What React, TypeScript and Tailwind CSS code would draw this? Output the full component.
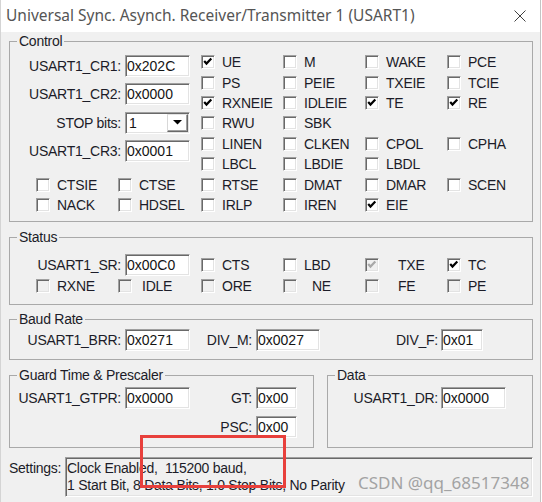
import React from "react";

const SUNK =
  "border border-t-[#a0a0a0] border-l-[#a0a0a0] border-b-white border-r-white shadow-[inset_1px_1px_0_#696969,inset_-1px_-1px_0_#e3e3e3]";
const TXT = "text-[14px] tracking-[-0.25px] text-[#1c1c28] whitespace-nowrap";

function Check({ checked = false, disabled = false }: { checked?: boolean; disabled?: boolean }) {
  return (
    <span className={`relative block w-[14px] h-[14px] shrink-0 ${SUNK} ${disabled ? "bg-[#f0f0f0]" : "bg-white"}`}>
      {checked && (
        <svg className="absolute left-0 top-0" width="12" height="12" viewBox="0 0 12 12">
          <path
            d="M2.2 5 L4.5 7.6 L9.3 2.6"
            fill="none"
            stroke={disabled ? "#a8a8a8" : "#000"}
            strokeWidth="2.2"
          />
        </svg>
      )}
    </span>
  );
}

function CB({
  label,
  checked = false,
  disabled = false,
  gap = "ml-[7px]",
}: {
  label?: string;
  checked?: boolean;
  disabled?: boolean;
  gap?: string;
}) {
  if (!label) return <div className="h-[20.4px]" />;
  return (
    <div className="flex items-center h-[20.4px]">
      <Check checked={checked} disabled={disabled} />
      <span className={`${gap} ${TXT} leading-[16px]`}>{label}</span>
    </div>
  );
}

function Field({ value, w }: { value: string; w: string }) {
  return (
    <div
      className={`${w} h-[22px] shrink-0 bg-white ${SUNK} pl-[1px] text-[14px] leading-[20px] text-[#141414] whitespace-nowrap overflow-hidden`}
    >
      {value}
    </div>
  );
}

function LabeledField({
  label,
  value,
  boxW,
  outer,
  gap = "gap-[4px]",
}: {
  label: string;
  value: string;
  boxW: string;
  outer: string;
  gap?: string;
}) {
  return (
    <div className={`${outer} flex justify-end items-center ${gap} shrink-0`}>
      <span className={`${TXT} leading-[16px]`}>{label}</span>
      <Field value={value} w={boxW} />
    </div>
  );
}

function Group({
  title,
  className = "",
  children,
}: {
  title: string;
  className?: string;
  children: React.ReactNode;
}) {
  return (
    <fieldset className={`border border-[#a9a9a9] min-w-0 ${className}`}>
      <legend className={`ml-[7px] px-[2px] leading-[15px] ${TXT}`}>{title}</legend>
      {children}
    </fieldset>
  );
}

export default function App() {
  return (
    <div className="relative w-[542px] h-[502px] bg-white overflow-hidden font-['Liberation_Sans',Arial,sans-serif]">
      <div className="w-[541px] h-[502px] bg-[#f0f0f0] border-l border-r border-l-[#d4d4d4] border-r-[#c4c4c4] flex flex-col">
        {/* title bar */}
        <div className="h-[32px] shrink-0 bg-white flex items-center justify-between pl-[5px] pr-[14px]">
          <span className="font-['Noto_Sans',sans-serif] text-[15.5px] text-[#555555] whitespace-nowrap">
            Universal Sync. Asynch. Receiver/Transmitter 1 (USART1)
          </span>
          <svg width="12" height="12" viewBox="0 0 12 12">
            <path d="M0.5 0.5 L11.5 11.5 M11.5 0.5 L0.5 11.5" stroke="#404040" strokeWidth="1" />
          </svg>
        </div>

        <div className="pl-[8px] pr-[7px] flex flex-col">
          {/* Control */}
          <Group title="Control" className="mt-[2px]">
            <div className="flex">
              <div className="w-[191px] pr-[11px] pt-[6px] flex flex-col items-end gap-[6.4px] shrink-0">
                <LabeledField label="USART1_CR1:" value="0x202C" boxW="w-[65px]" outer="" />
                <LabeledField label="USART1_CR2:" value="0x0000" boxW="w-[65px]" outer="" />
                <div className="flex items-center gap-[4px]">
                  <span className={`${TXT} leading-[16px]`}>STOP bits:</span>
                  <div className={`w-[65px] h-[22px] bg-white ${SUNK} flex items-center`}>
                    <span className="pl-[3px] flex-1 text-[14px] leading-[20px] text-[#141414]">1</span>
                    <div className="w-[21px] h-[18px] mr-[1px] bg-white border border-t-[#e3e3e3] border-l-[#d8d8d8] border-b-[#696969] border-r-[#696969] shadow-[inset_-1px_-1px_0_#a0a0a0] flex items-center justify-center">
                      <svg width="9" height="5" viewBox="0 0 9 5">
                        <path d="M0 0 H9 L4.5 4.5 Z" fill="#000" />
                      </svg>
                    </div>
                  </div>
                </div>
                <LabeledField label="USART1_CR3:" value="0x0001" boxW="w-[65px]" outer="" />
              </div>
              <div className="mt-[3px] grid grid-cols-[82px_82px_82px_82px]">
                <CB label="UE" checked />
                <CB label="M" />
                <CB label="WAKE" />
                <CB label="PCE" />
                <CB label="PS" />
                <CB label="PEIE" />
                <CB label="TXEIE" />
                <CB label="TCIE" />
                <CB label="RXNEIE" checked />
                <CB label="IDLEIE" />
                <CB label="TE" checked />
                <CB label="RE" checked />
                <CB label="RWU" />
                <CB label="SBK" />
                <CB />
                <CB />
                <CB label="LINEN" />
                <CB label="CLKEN" />
                <CB label="CPOL" />
                <CB label="CPHA" />
                <CB label="LBCL" />
                <CB label="LBDIE" />
                <CB label="LBDL" />
                <CB />
              </div>
            </div>
            <div className="pl-[26px] pb-[6px] grid grid-cols-[82px_83px_82px_82px_82px_82px]">
              <CB label="CTSIE" />
              <CB label="CTSE" />
              <CB label="RTSE" />
              <CB label="DMAT" />
              <CB label="DMAR" />
              <CB label="SCEN" />
              <CB label="NACK" />
              <CB label="HDSEL" />
              <CB label="IRLP" />
              <CB label="IREN" />
              <CB label="EIE" checked />
              <CB />
            </div>
          </Group>

          {/* Status */}
          <Group title="Status" className="mt-[8px]">
            <div className="pt-[9px] flex items-center">
              <LabeledField label="USART1_SR:" value="0x00C0" boxW="w-[65px]" outer="w-[191px] pr-[11px]" />
              <div className="grid grid-cols-[82px_82px_82px_82px]">
                <CB label="CTS" />
                <CB label="LBD" />
                <CB label="TXE" checked disabled gap="ml-[19px]" />
                <CB label="TC" checked />
              </div>
            </div>
            <div className="pl-[26px] pb-[7px] grid grid-cols-[82px_83px_82px_82px_82px_82px]">
              <CB label="RXNE" disabled />
              <CB label="IDLE" disabled gap="ml-[10px]" />
              <CB label="ORE" disabled />
              <CB label="NE" disabled gap="ml-[15px]" />
              <CB label="FE" disabled gap="ml-[19px]" />
              <CB label="PE" disabled />
            </div>
          </Group>

          {/* Baud Rate */}
          <Group title="Baud Rate" className="mt-[7px]">
            <div className="pt-[2.5px] pb-[8px] flex items-center">
              <LabeledField label="USART1_BRR:" value="0x0271" boxW="w-[65px]" outer="w-[191px] pr-[11px]" />
              <LabeledField label="DIV_M:" value="0x0027" boxW="w-[64px]" outer="w-[119px]" />
              <LabeledField label="DIV_F:" value="0x01" boxW="w-[42px]" outer="w-[163px]" gap="gap-[3px]" />
            </div>
          </Group>

          {/* Guard + Data */}
          <div className="mt-[7.5px] flex items-stretch">
            <Group title="Guard Time & Prescaler" className="w-[305px] shrink-0">
              <div className="pt-[4px] pb-[9px] flex flex-col gap-[7px]">
                <div className="flex items-center">
                  <LabeledField label="USART1_GTPR:" value="0x0000" boxW="w-[65px]" outer="w-[191px] pr-[11px]" />
                  <LabeledField label="GT:" value="0x00" boxW="w-[41px]" outer="w-[96px]" />
                </div>
                <div className="flex items-center pl-[191px]">
                  <LabeledField label="PSC:" value="0x00" boxW="w-[41px]" outer="w-[96px]" />
                </div>
              </div>
            </Group>
            <Group title="Data" className="ml-[13px] w-[206px] shrink-0">
              <div className="pt-[4px] flex">
                <LabeledField label="USART1_DR:" value="0x0000" boxW="w-[65px]" outer="w-[178px]" gap="gap-[3px]" />
              </div>
            </Group>
          </div>

          {/* Settings */}
          <div className="mt-[9.5px] flex items-start">
            <span className={`${TXT} pt-[2.5px] leading-[17px]`}>Settings:</span>
            <div className={`ml-auto w-[468px] h-[40px] ${SUNK} bg-[#f0f0f0] pl-[1px] pt-[1.5px] ${TXT} leading-[17px] whitespace-pre`}>
              <div>Clock Enabled,  115200 baud,</div>
              <div>1 Start Bit, 8 Data Bits, 1.0 Stop Bits, No Parity</div>
            </div>
          </div>
        </div>
      </div>

      {/* annotation overlays */}
      <div className="absolute left-[140px] top-[435px] w-[146px] h-[53px] border-[3px] border-[#e8403c]" />
      <div className="absolute left-[358px] top-[473px] font-['Noto_Sans',sans-serif] text-[17px] leading-[20px] text-[#a3a3a3] whitespace-nowrap">
        CSDN @qq_68517348
      </div>
    </div>
  );
}
